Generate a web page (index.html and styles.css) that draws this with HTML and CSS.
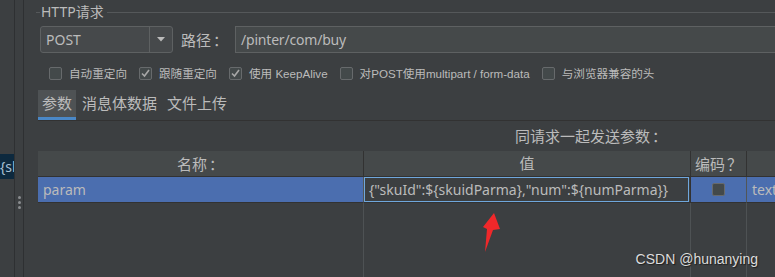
FILE: index.html
```html
<!DOCTYPE html>
<html lang="zh-CN">
<head>
    <meta charset="UTF-8">
    <meta name="viewport" content="width=device-width, initial-scale=1.0">
    <title>HTTP请求</title>
    <link rel="stylesheet" href="styles.css">
</head>
<body>
    <div class="app">
        <div class="gutter">
            <div class="gutter-left">
                <div class="chip">{sl</div>
            </div>
            <div class="gutter-mid">
                <div class="dots"><span></span><span></span><span></span></div>
            </div>
        </div>

        <div class="main">
            <div class="legend">
                <span class="legend-tick"></span>
                <span class="legend-title">HTTP请求</span>
                <span class="legend-line"></span>
            </div>

            <div class="request-row">
                <div class="select">
                    <span class="select-value">POST</span>
                    <span class="select-btn">
                        <svg width="8" height="5" viewBox="0 0 8 5"><path d="M0 0 H8 L4 4.5 Z" fill="#bbbbbb"/></svg>
                    </span>
                </div>
                <span class="path-label">路径<span class="fw">：</span></span>
                <div class="path-input">/pinter/com/buy</div>
            </div>

            <div class="options">
                <label class="option"><span class="check"></span>自动重定向</label>
                <label class="option"><span class="check checked"><svg width="11" height="11" viewBox="0 0 11 11"><path d="M2 5.5 L4.5 8 L9 2" fill="none" stroke="#a8a8a8" stroke-width="1.6"/></svg></span>跟随重定向</label>
                <label class="option"><span class="check checked"><svg width="11" height="11" viewBox="0 0 11 11"><path d="M2 5.5 L4.5 8 L9 2" fill="none" stroke="#a8a8a8" stroke-width="1.6"/></svg></span>使用 KeepAlive</label>
                <label class="option"><span class="check"></span>对POST使用multipart / form-data</label>
                <label class="option"><span class="check"></span>与浏览器兼容的头</label>
            </div>

            <div class="tabs">
                <div class="tab active">参数</div>
                <div class="tab">消息体数据</div>
                <div class="tab">文件上传</div>
            </div>

            <div class="panel">
                <div class="panel-title">同请求一起发送参数<span class="fw">：</span></div>
                <div class="table">
                    <div class="th">名称<span class="fw">：</span></div>
                    <div class="th">值</div>
                    <div class="th">编码<span class="fw">？</span></div>
                    <div class="th"></div>

                    <div class="td selected">param</div>
                    <div class="td edit-cell"><div class="editor">{"skuId":${skuidParma},"num":${numParma}}</div></div>
                    <div class="td selected center"><span class="check"></span></div>
                    <div class="td selected">text</div>

                    <div class="filler"></div>
                    <div class="filler"></div>
                    <div class="filler"></div>
                    <div class="filler"></div>
                </div>
            </div>
        </div>

        <svg class="arrow" width="24" height="44" viewBox="480 210 24 44">
            <path d="M494 213 L500 229 L493 230 L485 252 L487 229 L483 227 Z" fill="#f0282a"/>
        </svg>
        <div class="watermark">CSDN @hunanying</div>
    </div>
</body>
</html>
```

FILE: styles.css
```css
body {
    margin: 0;
    background-color: #3c3f41;
    color: #bbbbbb;
    font-family: "Noto Sans", "Noto Sans CJK SC", sans-serif;
    font-size: 14px;
}
.fw {
    font-family: "Noto Sans CJK TC", sans-serif; /* centred full-width punctuation */
    padding-left: 2px;
}
.app {
    position: relative; /* context for the arrow and watermark */
    display: flex;
    height: 277px;
    overflow: hidden;
}
.gutter {
    display: flex;
    flex: none;
}
.gutter-left {
    width: 14px;
    border-right: 1px solid #2e3032;
}
.chip {
    margin-top: 154px;
    height: 25px;
    line-height: 25px;
    background-color: #0d293e;
    color: #a7c0d4;
    overflow: hidden;
    white-space: nowrap;
}
.gutter-mid {
    width: 8px;
    border-right: 1px solid #2e3032;
}
.dots {
    margin-top: 196px;
    display: flex;
    flex-direction: column;
    align-items: center;
    gap: 2px;
}
.dots span {
    width: 3px;
    height: 3px;
    border-radius: 50%;
    background-color: #8a8d8f;
}
.main {
    flex: 1;
    min-width: 0;
    margin-left: 12px;
}
.legend {
    display: flex;
    align-items: center;
    height: 14px;
    margin-top: 5px;
}
.legend-tick {
    width: 4px;
    height: 1px;
    background-color: #55585a;
}
.legend-title {
    padding: 0 3px 0 1px;
    line-height: 14px;
}
.legend-line {
    flex: 1;
    height: 1px;
    background-color: #55585a;
}
.request-row {
    display: flex;
    align-items: center;
    height: 27px;
    margin-top: 7px;
    padding-left: 4px;
}
.select {
    display: flex;
    width: 133px;
    height: 27px;
    box-sizing: border-box;
    border: 1px solid #5e6162;
    border-radius: 3px;
    background-color: #46494b;
}
.select-value {
    flex: 1;
    padding-left: 5px;
    line-height: 25px;
}
.select-btn {
    width: 22px;
    border-left: 1px solid #5e6162;
    display: flex;
    align-items: center;
    justify-content: center;
}
.path-label {
    margin: 0 7px 0 8px;
    font-size: 15px;
}
.path-input {
    flex: 1;
    height: 27px;
    box-sizing: border-box;
    border: 1px solid #5e6162;
    border-right: none;
    background-color: #45494a;
    padding-left: 5px;
    line-height: 25px;
    letter-spacing: -0.2px;
}
.options {
    display: flex;
    align-items: center;
    gap: 12px;
    height: 20px;
    margin-top: 10px;
    padding-left: 13px;
    font-family: "Liberation Sans", "Noto Sans CJK SC", sans-serif;
    font-size: 11.6px;
    white-space: nowrap;
}
.option {
    display: flex;
    align-items: center;
    gap: 7px;
}
.check {
    display: inline-flex;
    align-items: center;
    justify-content: center;
    width: 13px;
    height: 13px;
    box-sizing: border-box;
    border: 1px solid #676a6c;
    border-radius: 2px;
    background-color: #43494a;
}
.tabs {
    display: flex;
    gap: 2px;
    height: 30px;
    margin-top: 7px;
    margin-left: 2px;
    border-bottom: 1px solid #323232;
}
.tab {
    padding: 0 4px;
    line-height: 27px;
    font-size: 15px;
    border-bottom: 3px solid transparent;
}
.tab.active {
    background-color: #4e5254;
    border-bottom-color: #4a88c7;
}
.panel {
    width: 1106px;
    margin-left: 2px;
}
.panel-title {
    margin-top: 5px;
    height: 20px;
    line-height: 20px;
    text-align: center;
    font-size: 15px;
}
.table {
    display: grid;
    grid-template-columns: 326px 327px 56px 1fr;
    grid-template-rows: 26px 26px 80px;
    margin-top: 5px;
}
.th {
    background-color: #45494a;
    border-right: 1px solid #323232;
    border-bottom: 1px solid #323232;
    line-height: 25px;
    text-align: center;
    font-size: 15px;
}
.td {
    border-right: 1px solid #515658;
    border-bottom: 1px solid #323232;
    line-height: 25px;
    padding-left: 5px;
    white-space: nowrap;
    overflow: hidden;
}
.td.selected {
    background-color: #4b6eaf;
}
.td.center {
    padding-left: 0;
    display: flex;
    align-items: center;
    justify-content: center;
}
.edit-cell {
    padding-left: 0;
    border-right-color: #323232;
}
.editor {
    height: 25px;
    margin-right: 1px;
    box-sizing: border-box;
    border: 1px solid #6fa7dc;
    padding-left: 4px;
    line-height: 23px;
    background-color: #3c3f41;
}
.filler {
    border-right: 1px solid #4e5254;
}
.arrow {
    position: absolute;
    left: 480px;
    top: 210px;
}
.watermark {
    position: absolute;
    right: 17px;
    top: 251px;
    font-family: "Liberation Sans", Arial, sans-serif;
    font-size: 14px;
    color: #dcdcdc;
    text-shadow: 1px 1px 1px #1e1e1e;
}
```
